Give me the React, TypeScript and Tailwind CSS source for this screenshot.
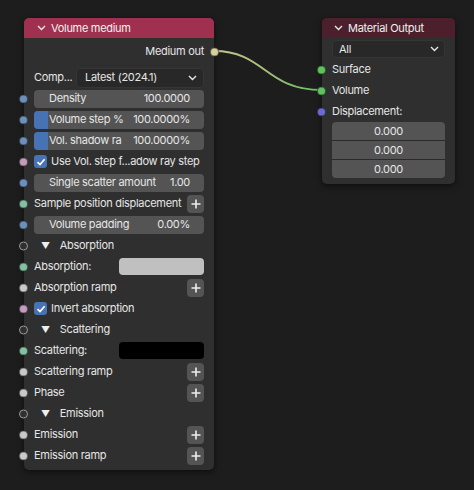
import React from 'react';

const font = { fontFamily: 'Inter, "Noto Sans", sans-serif' };

const Socket = ({ color, side = 'left', hollow = false }: { color: string; side?: 'left' | 'right'; hollow?: boolean }) => (
  <span
    className={`absolute top-1/2 -translate-y-1/2 w-[9px] h-[9px] rounded-full ${side === 'left' ? 'left-[-15px]' : 'right-[-15px]'} ${
      hollow ? 'border border-[#9a9a9a] bg-[#2f2f2f]' : 'border border-black/50'
    }`}
    style={hollow ? undefined : { backgroundColor: color }}
  />
);

const Chevron = ({ className = '' }: { className?: string }) => (
  <svg width="9" height="6" viewBox="0 0 9 6" className={className}>
    <polyline points="1,1 4.5,4.5 8,1" fill="none" stroke="#e6e6e6" strokeWidth="1.4" />
  </svg>
);

const Row = ({ children, socket, hollow, className = '' }: { children: React.ReactNode; socket?: string; hollow?: boolean; className?: string }) => (
  <div className={`relative h-[21px] flex items-center whitespace-nowrap ${className}`}>
    {(socket || hollow) && <Socket color={socket || ''} hollow={hollow} />}
    {children}
  </div>
);

const NumField = ({ label, value, fill }: { label: string; value: string; fill?: boolean }) => (
  <div className="relative flex-1 h-[18px] rounded-[4px] bg-[#545454] overflow-hidden flex items-center justify-between pl-[15px] pr-[14px]">
    {fill && <span className="absolute left-0 top-0 bottom-0 w-[14px] bg-[#4772b3]" />}
    <span className="relative whitespace-nowrap">{label}</span>
    <span className="relative whitespace-nowrap">{value}</span>
  </div>
);

const Plus = () => (
  <div className="ml-auto w-[17px] h-[18px] rounded-[4px] bg-[#545454] flex items-center justify-center">
    <svg width="10" height="10" viewBox="0 0 10 10">
      <path d="M5 0.5V9.5M0.5 5H9.5" stroke="#eeeeee" strokeWidth="1.6" />
    </svg>
  </div>
);

const Check = ({ label }: { label: string }) => (
  <div className="flex items-center gap-[4px]">
    <span className="w-[13px] h-[13px] rounded-[3px] bg-[#4772b3] flex items-center justify-center">
      <svg width="10" height="10" viewBox="0 0 10 10">
        <polyline points="1.5,5.2 4,7.6 8.6,2.2" fill="none" stroke="#ffffff" strokeWidth="1.7" />
      </svg>
    </span>
    <span className="whitespace-nowrap">{label}</span>
  </div>
);

const Panel = ({ label }: { label: string }) => (
  <Row hollow>
    <span className="ml-[7px] text-[9px] leading-none text-[#eeeeee]">▼</span>
    <span className="ml-[10px]">{label}</span>
  </Row>
);

const FLOAT = '#6d8fba';
const BOOL = '#c49cbc';
const VEC = '#83c1a2';
const GRAY = '#c9c9c9';

export default function App() {
  return (
    <div className="relative w-[474px] h-[490px] bg-[#1d1d1d] overflow-hidden text-[11px] tracking-[-0.3px] text-[#e6e6e6]" style={font}>
      <svg className="absolute left-0 top-0" width="474" height="490">
        <defs>
          <linearGradient id="lnk" x1="214" y1="0" x2="322" y2="0" gradientUnits="userSpaceOnUse">
            <stop offset="0" stopColor="#c9c28e" />
            <stop offset="0.45" stopColor="#a8bf7a" />
            <stop offset="1" stopColor="#5fc25f" />
          </linearGradient>
        </defs>
        <path d="M214 51 C265 51 265 90 322 90" fill="none" stroke="url(#lnk)" strokeWidth="2" />
      </svg>

      {/* Volume medium */}
      <div className="absolute left-[24px] top-[18px] w-[190px] h-[452px] rounded-[5px] bg-[#2f2f2f] shadow-[0_2px_6px_rgba(0,0,0,0.55)] flex flex-col">
        <div className="h-[20px] rounded-t-[5px] bg-[#a0304f] flex items-center pl-[13px] gap-[5px] text-[#f0f0f0]">
          <Chevron />
          <span>Volume medium</span>
        </div>
        <div className="flex flex-col px-[10px] pt-[3px]">
          <div className="relative h-[21px] flex items-center justify-end">
            <span>Medium out</span>
            <Socket color="#d6cf9e" side="right" />
          </div>
          <div className="h-[21px] mt-[5px] flex items-center whitespace-nowrap">
            <span className="w-[42px]">Comp...</span>
            <div className="flex-1 h-[20px] rounded-[4px] bg-[#282828] border border-[#353535] flex items-center justify-between pl-[8px] pr-[6px]">
              <span>Latest (2024.1)</span>
              <Chevron />
            </div>
          </div>
          <Row socket={FLOAT}><NumField label="Density" value="100.0000" /></Row>
          <Row socket={FLOAT}><NumField label="Volume step %" value="100.0000%" fill /></Row>
          <Row socket={FLOAT}><NumField label="Vol. shadow ra" value="100.0000%" fill /></Row>
          <Row socket={BOOL}><Check label="Use Vol. step f...adow ray step" /></Row>
          <Row socket={FLOAT}><NumField label="Single scatter amount" value="1.00" /></Row>
          <Row socket={VEC}><span>Sample position displacement</span><Plus /></Row>
          <Row socket={FLOAT}><NumField label="Volume padding" value="0.00%" /></Row>
          <Panel label="Absorption" />
          <Row socket={VEC}>
            <span>Absorption:</span>
            <span className="ml-auto w-[85px] h-[17px] rounded-[4px] bg-[#c0c0c0]" />
          </Row>
          <Row socket={GRAY}><span>Absorption ramp</span><Plus /></Row>
          <Row socket={BOOL}><Check label="Invert absorption" /></Row>
          <Panel label="Scattering" />
          <Row socket={VEC}>
            <span>Scattering:</span>
            <span className="ml-auto w-[85px] h-[17px] rounded-[4px] bg-black" />
          </Row>
          <Row socket={GRAY}><span>Scattering ramp</span><Plus /></Row>
          <Row socket={GRAY}><span>Phase</span><Plus /></Row>
          <Panel label="Emission" />
          <Row socket={GRAY}><span>Emission</span><Plus /></Row>
          <Row socket={GRAY}><span>Emission ramp</span><Plus /></Row>
        </div>
      </div>

      {/* Material Output */}
      <div className="absolute left-[322px] top-[18px] w-[133px] h-[166px] rounded-[5px] bg-[#2f2f2f] shadow-[0_2px_6px_rgba(0,0,0,0.55)] flex flex-col">
        <div className="h-[20px] rounded-t-[5px] bg-[#4b1f2c] flex items-center pl-[12px] gap-[5px] text-[#f0f0f0]">
          <Chevron />
          <span>Material Output</span>
        </div>
        <div className="flex flex-col px-[10px] pt-[2px]">
          <div className="h-[18px] rounded-[4px] bg-[#282828] border border-[#353535] flex items-center justify-between pl-[6px] pr-[5px]">
            <span>All</span>
            <Chevron />
          </div>
          <Row socket="#5fc25f" className="mt-[1px]"><span>Surface</span></Row>
          <Row socket="#5fc25f"><span>Volume</span></Row>
          <Row socket="#6b6bd0"><span>Displacement:</span></Row>
          <div className="flex flex-col rounded-[4px] overflow-hidden gap-[1px] bg-[#2a2a2a]">
            <div className="h-[18px] bg-[#545454] flex items-center justify-center">0.000</div>
            <div className="h-[18px] bg-[#545454] flex items-center justify-center">0.000</div>
            <div className="h-[18px] bg-[#545454] flex items-center justify-center">0.000</div>
          </div>
        </div>
      </div>
    </div>
  );
}
